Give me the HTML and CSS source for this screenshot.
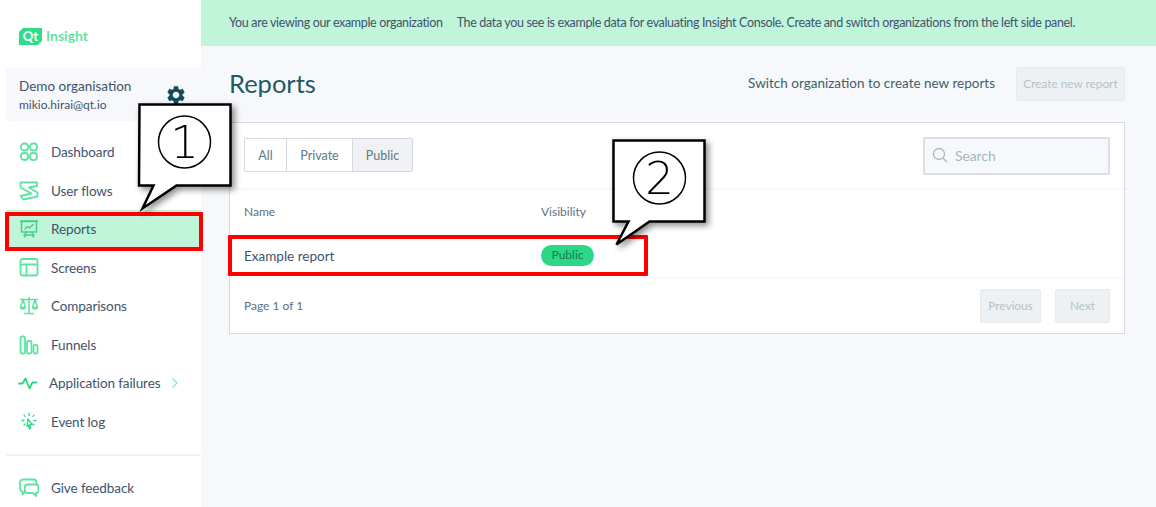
FILE: index.html
```html
<!DOCTYPE html>
<html lang="en">
<head>
  <meta charset="UTF-8" />
  <title>Reports - Qt Insight</title>
  <link rel="stylesheet" href="styles.css">
</head>
<body>
  <aside class="sidebar">
    <div class="logo"><span class="logo-mark">Qt</span><span class="logo-text">Insight</span></div>

    <div class="org">
      <div class="org-name">Demo organisation</div>
      <div class="org-mail">mikio.hirai@qt.io</div>
      <svg class="org-gear" viewBox="0 0 24 24" width="22" height="22"><path d="M19.14,12.94c0.04-0.3,0.06-0.61,0.06-0.94c0-0.32-0.02-0.64-0.07-0.94l2.03-1.58c0.18-0.14,0.23-0.41,0.12-0.61l-1.92-3.32c-0.12-0.22-0.37-0.29-0.59-0.22l-2.39,0.96c-0.5-0.38-1.03-0.7-1.62-0.94L14.4,2.81c-0.04-0.24-0.24-0.41-0.48-0.41h-3.84c-0.24,0-0.43,0.17-0.47,0.41L9.25,5.35C8.66,5.59,8.12,5.92,7.63,6.29L5.24,5.33c-0.22-0.08-0.47,0-0.59,0.22L2.74,8.87C2.62,9.08,2.66,9.34,2.86,9.48l2.03,1.58C4.84,11.36,4.8,11.69,4.8,12s0.02,0.64,0.07,0.94l-2.03,1.58c-0.18,0.14-0.23,0.41-0.12,0.61l1.92,3.32c0.12,0.22,0.37,0.29,0.59,0.22l2.39-0.96c0.5,0.38,1.03,0.7,1.62,0.94l0.36,2.54c0.05,0.24,0.24,0.41,0.48,0.41h3.84c0.24,0,0.44-0.17,0.47-0.41l0.36-2.54c0.59-0.24,1.13-0.56,1.62-0.94l2.39,0.96c0.22,0.08,0.47,0,0.59-0.22l1.92-3.32c0.12-0.22,0.07-0.47-0.12-0.61L19.14,12.94z M12,15.6c-1.98,0-3.6-1.62-3.6-3.6s1.62-3.6,3.6-3.6s3.6,1.62,3.6,3.6S13.98,15.6,12,15.6z"/></svg>
    </div>

    <nav class="nav">
      <a class="nav-item">
        <svg class="icon icon-bold" viewBox="0 0 20 20"><rect x="2" y="1.500" width="7" height="7" rx="3"/><rect x="11" y="1.500" width="7" height="7" rx="3"/><rect x="2" y="11" width="7" height="7" rx="3"/><rect x="11" y="11" width="7" height="7" rx="3"/></svg>
        Dashboard
      </a>
      <a class="nav-item">
        <svg class="icon icon-bold" viewBox="0 0 20 20"><path d="M1.500 1.500h16.500v3.500l-8 1.500 8.500 5v4l-14 3-3-3.500 11-2.500-11-6z"/></svg>
        User flows
      </a>
      <a class="nav-item active">
        <svg class="icon icon-dark" viewBox="0 0 20 20"><path d="M2.500 2.500h15v10.500h-15z"/><path d="M1.500 2h17M7 13l-1.500 5M13 13l1.500 5M5 16h10"/><path d="M6 10l2.500-2.500 2 1.500 3.500-3.500"/></svg>
        Reports
      </a>
      <a class="nav-item">
        <svg class="icon icon-bold" viewBox="0 0 20 20"><rect x="1.500" y="1" width="17" height="16.500" rx="2"/><path d="M1.500 6.500h17M7.500 6.500v11"/></svg>
        Screens
      </a>
      <a class="nav-item">
        <svg class="icon" viewBox="0 0 20 20"><path d="M10 1.500v15M5.500 17.500h9M1.500 3.500h17M4 3.500l-2.500 8h5zM16 3.500l-2.500 8h5zM1.500 11.500c.5 2 4.500 2 5 0M13.500 11.500c.5 2 4.500 2 5 0"/></svg>
        Comparisons
      </a>
      <a class="nav-item">
        <svg class="icon icon-bold" viewBox="0 0 20 20"><rect x="1.500" y="1.500" width="4.500" height="17" rx="1.500"/><rect x="8" y="6" width="4.500" height="12.500" rx="1.500"/><rect x="14.500" y="10" width="4" height="8.500" rx="1.500"/></svg>
        Funnels
      </a>
      <a class="nav-item nav-item-failures">
        <svg class="icon icon-pulse" viewBox="0 0 20 20"><path d="M1 10.500h3.500l3-5 4 10 3-6h4"/></svg>
        Application failures
        <svg class="chevron" viewBox="0 0 8 12" width="8" height="12"><path d="M1.500 1.500l4.500 4.500-4.500 4.500"/></svg>
      </a>
      <a class="nav-item">
        <svg class="icon icon-click" viewBox="0 0 20 20"><path d="M10 1.500v2M5 3l1 1.500M15 3l-1 1.500M3 8.500h2M15 8.500h2M5 13l1-1M15 13l-1-1"/><path d="M9 7l4 5.500-2.200.2.900 3.800-1.300.5-1-3.800-1.400 1z"/></svg>
        Event log
      </a>
    </nav>

    <div class="nav-foot">
      <a class="nav-item">
        <svg class="icon icon-bold" viewBox="0 0 20 20"><path d="M6.500 14h-1l-2 2.500v-3c-1.500-.5-2.500-1.500-2.500-3v-6c0-2 1.500-3 3-3h10.500c1.500 0 3 1 3 3v1.500"/><path d="M8.500 6.500h8.500c1.500 0 2.500 1 2.500 2.500v3.500c0 1.500-1 2.500-2.500 2.500v3l-3-3h-5.500c-1.500 0-2.500-1-2.500-2.500v-3.500c0-1.500 1-2.500 2.500-2.500z"/></svg>
        Give feedback
      </a>
    </div>
  </aside>

  <div class="content">
    <div class="banner">
      <span>You are viewing our example organization</span>
      <span>The data you see is example data for evaluating Insight Console. Create and switch organizations from the left side panel.</span>
    </div>

    <main class="main">
      <div class="page-head">
        <h1>Reports</h1>
        <div class="page-actions">
          <span class="switch-note">Switch organization to create new reports</span>
          <button class="btn btn-create">Create new report</button>
        </div>
      </div>

      <section class="card">
        <div class="toolbar">
          <div class="segments">
            <button class="segment seg-all">All</button>
            <button class="segment seg-private">Private</button>
            <button class="segment seg-public selected">Public</button>
          </div>
          <div class="search">
            <svg viewBox="0 0 16 16" width="16" height="16"><circle cx="7" cy="7" r="5.500"/><path d="M11 11l4 4"/></svg>
            <span>Search</span>
          </div>
        </div>

        <div class="row row-head">
          <div class="col-name">Name</div>
          <div class="col-vis">Visibility</div>
        </div>
        <div class="row row-report">
          <div class="col-name">Example report</div>
          <div class="col-vis"><span class="badge">Public</span></div>
        </div>

        <div class="card-foot">
          <span class="page-count">Page 1 of 1</span>
          <div class="pager">
            <button class="btn btn-prev">Previous</button>
            <button class="btn btn-next">Next</button>
          </div>
        </div>
      </section>
    </main>
  </div>

  <!-- annotations laid over the screenshot -->
  <div class="mark mark-nav"></div>
  <div class="mark mark-row"></div>
  <svg class="callout callout-one" viewBox="0 0 100 112" width="100" height="112">
    <path d="M1.500 1.500h91v81h-54l-34 23 11-23h-14.500z"/>
    <circle cx="46.500" cy="39" r="26"/>
    <text x="46.500" y="55">1</text>
  </svg>
  <svg class="callout callout-two" viewBox="0 0 100 112" width="100" height="112">
    <path d="M1.500 1.500h91v81h-55l-33 23 12-23h-15z"/>
    <circle cx="47.500" cy="39" r="26"/>
    <text x="47.500" y="55">2</text>
  </svg>
</body>
</html>
```

FILE: styles.css
```css
* {
  box-sizing: border-box;
}
html, body {
  height: 100%;
}
body {
  margin: 0;
  display: flex;
  overflow: hidden;
  position: relative;
  font-family: "Lato", "Noto Sans", sans-serif;
  font-size: 13px;
  color: #41536b;
  background-color: #f7f8fb;
}
button {
  font-family: inherit;
  font-size: 12.500px;
}

/* Sidebar */
.sidebar {
  width: 201px;
  flex: none;
  background-color: #fff;
}
.logo {
  height: 68px;
  padding: 28px 0 0 19px;
  display: flex;
  align-items: flex-start;
  gap: 4px;
}
.logo-mark {
  width: 23px;
  height: 17px;
  line-height: 17px;
  text-align: center;
  color: #fff;
  font-weight: 700;
  font-size: 13px;
  background-color: #2cde85;
  clip-path: polygon(4px 0, 100% 0, 100% calc(100% - 4px), calc(100% - 4px) 100%, 0 100%, 0 4px);
}
.logo-text {
  color: #5fe3a1;
  font-size: 14px;
  font-weight: 700;
  line-height: 16px;
}
.org {
  position: relative;
  margin-left: 6px;
  height: 53px;
  padding: 10px 0 0 13px;
  background-color: #f7f8fb;
}
.org-name {
  font-size: 13.500px;
  line-height: 17px;
}
.org-mail {
  font-size: 12px;
  line-height: 19px;
}
.org-gear {
  position: absolute;
  right: 14px;
  top: 16px;
  fill: #0f4d5a;
}
.nav {
  margin: 12px 0 0 6px;
}
.nav-item {
  height: 38.500px;
  padding-left: 13px;
  display: flex;
  align-items: center;
  gap: 12px;
  font-size: 13.500px;
  letter-spacing: -0.1px;
}
.nav-item.active {
  background-color: #c0f5d9;
}
.icon {
  width: 20px;
  height: 20px;
  flex: none;
  fill: none;
  stroke: #5fe3a1;
  stroke-width: 1.500;
  stroke-linejoin: round;
  stroke-linecap: round;
}
.icon-bold {
  stroke-width: 1.800;
}
.icon-dark {
  stroke: #44d08c;
}
.icon-pulse {
  margin-left: -1px;
  margin-right: -1px;
  stroke: #2cd67f;
  stroke-width: 1.800;
}
.icon-click {
  stroke: #2cd67f;
  stroke-width: 1.300;
}
.chevron {
  fill: none;
  stroke: #7fe8b4;
  stroke-width: 1.300;
  margin-left: -1px;
}
.nav-foot {
  margin: 13px 0 0 6px;
  padding-top: 13px;
  border-top: 2px solid #f2f3f6;
}

/* Main area */
.content {
  flex: 1;
}
.banner {
  height: 46px;
  padding: 0 0 2px 28px;
  display: flex;
  align-items: center;
  gap: 14px;
  font-size: 12.500px;
  letter-spacing: -0.34px;
  background-color: #c0f5d9;
}
.main {
  padding: 21px 31px 0 28px;
}
.page-head {
  height: 34px;
  display: flex;
  justify-content: space-between;
  align-items: center;
  margin-bottom: 21px;
}
h1 {
  margin: 0 0 2px;
  font-size: 25.500px;
  font-weight: 400;
  color: #1e5a64;
}
.page-actions {
  display: flex;
  align-items: center;
  gap: 21px;
  font-size: 13.500px;
  color: #3d5f6b;
}
.switch-note {
  padding-bottom: 2px;
}
.btn {
  height: 34px;
  padding: 0 0 2px;
  font-size: 11.800px;
  color: #b3c3c7;
  background-color: #eef1f4;
  border: 1px solid #e6e9ee;
  border-radius: 2px;
}
.btn-create {
  width: 109px;
}

/* Card */
.card {
  height: 212px;
  background-color: #fff;
  border: 1px solid #d5d8e0;
}
.toolbar {
  height: 67px;
  padding: 14px 14px 0;
  display: flex;
  justify-content: space-between;
  align-items: flex-start;
  border-bottom: 2px solid #f7f8fb;
}
.segments {
  display: flex;
  margin-top: 1px;
}
.segment {
  height: 34px;
  padding: 0;
  color: #5c7a82;
  background-color: #fff;
  border: 1px solid #d5d8e0;
  border-left: none;
}
.seg-all {
  width: 43px;
  border-left: 1px solid #d5d8e0;
  border-radius: 2px 0 0 2px;
}
.seg-private {
  width: 66px;
}
.seg-public {
  width: 60px;
  border-radius: 0 2px 2px 0;
}
.segment.selected {
  background-color: #f0f1f4;
}
.search {
  width: 187px;
  height: 38px;
  padding: 0 0 2px 7px;
  display: flex;
  align-items: center;
  gap: 7px;
  font-size: 14px;
  letter-spacing: -0.1px;
  color: #a3b8bd;
  background-color: #f7f8fb;
  border: 2px solid #dcdfe6;
  border-radius: 2px;
}
.search svg {
  fill: none;
  stroke: #a3b8bd;
  stroke-width: 1.300;
}
.row {
  display: flex;
  align-items: center;
  padding-left: 14px;
}
.row-head {
  height: 43px;
  font-size: 12px;
  color: #5d6f80;
}
.row-report {
  height: 46px;
  padding-top: 1px;
  font-size: 13.500px;
  border-bottom: 2px solid #f7f8fb;
}
.col-name {
  width: 297px;
}
.badge {
  display: inline-block;
  width: 53px;
  height: 21px;
  line-height: 20px;
  text-align: center;
  font-size: 12px;
  color: #177a57;
  background-color: #2cd885;
  border-radius: 11px;
}
.card-foot {
  height: 54px;
  padding: 0 14px;
  display: flex;
  justify-content: space-between;
  align-items: center;
  font-size: 12px;
  color: #5d6f80;
}
.page-count {
  padding-bottom: 2px;
}
.pager {
  display: flex;
  gap: 14px;
}
.btn-prev {
  width: 61px;
}
.btn-next {
  width: 55px;
}

/* Annotations */
.mark {
  position: absolute;
  border: 4px solid #fe0000;
  border-radius: 1px;
}
.mark-nav {
  left: 5px;
  top: 212px;
  width: 198px;
  height: 39px;
}
.mark-row {
  left: 228px;
  top: 235px;
  width: 420px;
  height: 41px;
}
.callout {
  position: absolute;
  overflow: visible;
  filter: drop-shadow(3px 3px 3px rgba(0, 0, 0, 0.45));
}
.callout path {
  fill: #fff;
  stroke: #000;
  stroke-width: 2.500;
  stroke-linejoin: miter;
}
.callout circle {
  fill: none;
  stroke: #000;
  stroke-width: 1.500;
}
.callout text {
  font-family: "DejaVu Sans", sans-serif;
  font-weight: 200;
  font-size: 45px;
  text-anchor: middle;
  fill: #000;
}
.callout-one {
  left: 138px;
  top: 103px;
}
.callout-two {
  left: 612px;
  top: 139px;
}
```
